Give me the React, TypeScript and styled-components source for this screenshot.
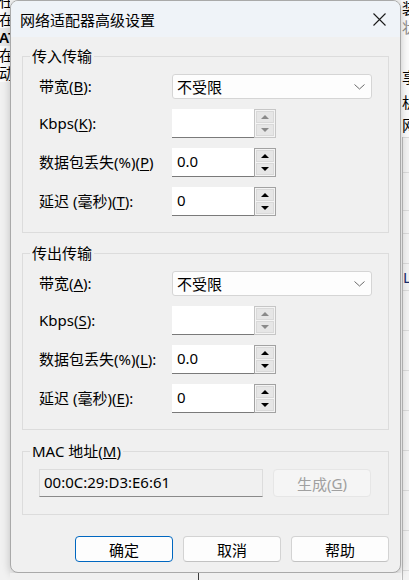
import { FC, ReactNode } from 'react'
import styled, { createGlobalStyle } from 'styled-components'

const GlobalStyle = createGlobalStyle`
  html, body {
    margin: 0;
    padding: 0;
  }
  body {
    font-family: 'Noto Sans', 'Noto Sans CJK SC', sans-serif;
    background: #f4f4f4;
    color: #000;
  }
`

type Row = { label: ReactNode; value?: string; disabled?: boolean }

const leftLines = ['任务', '在', 'AT', '在', '动']
const rightLines: { text: string; h: number; muted?: boolean }[] = [
  { text: '装', h: 16 },
  { text: '状', h: 22, muted: true },
  { text: '', h: 26 },
  { text: '享', h: 26 },
  { text: '机', h: 23 },
  { text: '网', h: 24 }
]
const rightRows = [34, 37, 22, 29, 26, 39, 39, 39, 39, 39, 39, 39, 39, 39, 39]

const SpinBox: FC<{ value?: string; disabled?: boolean }> = ({ value, disabled }) => (
  <Spin>
    <SpinInput>{value}</SpinInput>
    <SpinButtons $disabled={disabled}>
      <SpinButton>
        <Arrow $dir="up" $disabled={disabled} />
      </SpinButton>
      <SpinButton>
        <Arrow $dir="down" $disabled={disabled} />
      </SpinButton>
    </SpinButtons>
  </Spin>
)

const TransferGroup: FC<{ title: string; bandwidth: ReactNode; rows: Row[] }> = ({ title, bandwidth, rows }) => (
  <GroupBox>
    <Legend>{title}</Legend>
    <FormGrid>
      <Label>{bandwidth}</Label>
      <Combo>
        <span>不受限</span>
        <svg width="11" height="6" viewBox="0 0 11 6">
          <path d="M0.5 0.5 L5.5 5 L10.5 0.5" fill="none" stroke="#6a6a6a" strokeWidth="1" />
        </svg>
      </Combo>
      {rows.map((row, i) => (
        <FormRow key={i}>
          <Label>{row.label}</Label>
          <SpinBox value={row.value} disabled={row.disabled} />
        </FormRow>
      ))}
    </FormGrid>
  </GroupBox>
)

const App: FC = () => {
  return (
    <Page>
      <GlobalStyle />
      <LeftStrip>
        {leftLines.map((line, i) => (
          <BgLine key={i} $highlight={line === 'AT'}>
            {line}
          </BgLine>
        ))}
      </LeftStrip>
      <DialogColumn>
        <Dialog>
          <TitleBar>
            <Title>网络适配器高级设置</Title>
            <svg width="13" height="13" viewBox="0 0 13 13">
              <path d="M0.5 0.5 L12.5 12.5 M12.5 0.5 L0.5 12.5" stroke="#1b1b1b" strokeWidth="1.1" />
            </svg>
          </TitleBar>
          <Body>
            <TransferGroup
              title="传入传输"
              bandwidth={
                <>
                  带宽(<u>B</u>):
                </>
              }
              rows={[
                {
                  label: (
                    <>
                      Kbps(<u>K</u>):
                    </>
                  ),
                  disabled: true
                },
                {
                  label: (
                    <>
                      数据包丢失(%)(<u>P</u>)
                    </>
                  ),
                  value: '0.0'
                },
                {
                  label: (
                    <>
                      延迟 (毫秒)(<u>T</u>):
                    </>
                  ),
                  value: '0'
                }
              ]}
            />
            <Spacer $h={11} />
            <TransferGroup
              title="传出传输"
              bandwidth={
                <>
                  带宽(<u>A</u>):
                </>
              }
              rows={[
                {
                  label: (
                    <>
                      Kbps(<u>S</u>):
                    </>
                  ),
                  disabled: true
                },
                {
                  label: (
                    <>
                      数据包丢失(%)(<u>L</u>):
                    </>
                  ),
                  value: '0.0'
                },
                {
                  label: (
                    <>
                      延迟 (毫秒)(<u>E</u>):
                    </>
                  ),
                  value: '0'
                }
              ]}
            />
            <Spacer $h={12} />
            <GroupBox $bottom={17}>
              <Legend>
                MAC 地址(<u>M</u>)
              </Legend>
              <MacRow>
                <MacField>00:0C:29:D3:E6:61</MacField>
                <GenerateButton>
                  生成(<u>G</u>)
                </GenerateButton>
              </MacRow>
            </GroupBox>
            <Footer>
              <DialogButton $primary>确定</DialogButton>
              <DialogButton>取消</DialogButton>
              <DialogButton>帮助</DialogButton>
            </Footer>
          </Body>
        </Dialog>
        <BottomStrip>
          <BottomDivider />
        </BottomStrip>
      </DialogColumn>
      <RightStrip>
        {rightLines.map((line, i) => (
          <RightText key={i} $h={line.h} $muted={line.muted}>
            {line.text}
          </RightText>
        ))}
        <RightTable>
          {rightRows.map((h, i) => (
            <RightRow key={i} $h={h}>
              {i === 4 ? 'LA' : ''}
            </RightRow>
          ))}
        </RightTable>
      </RightStrip>
    </Page>
  )
}

const Page = styled.div`
  width: 409px;
  height: 580px;
  display: flex;
  overflow: hidden;
  background: #f4f4f4;
`

const LeftStrip = styled.div`
  width: 10px;
  flex-shrink: 0;
  display: flex;
  flex-direction: column;
  overflow: hidden;
  margin-top: -8px;
  background: linear-gradient(#fbfbfb 0, #fbfbfb 90px, #f1f1f1 90px);
  font-family: 'Noto Sans CJK SC', sans-serif;
  font-size: 15px;
  line-height: 18px;
  white-space: nowrap;
`

const BgLine = styled.div<{ $highlight?: boolean }>`
  height: 18px;
  flex-shrink: 0;
  margin-left: -1px;
  background: ${(p) => (p.$highlight ? '#e9e9e9' : 'transparent')};
  font-family: ${(p) => (p.$highlight ? "'Noto Sans', sans-serif" : "'Noto Sans CJK SC', sans-serif")};
  font-weight: ${(p) => (p.$highlight ? 600 : 400)};
`

const DialogColumn = styled.div`
  width: 391px;
  flex-shrink: 0;
  display: flex;
  flex-direction: column;
  position: relative;
  z-index: 1;
`

const Dialog = styled.div`
  height: 573px;
  flex-shrink: 0;
  box-sizing: border-box;
  display: flex;
  flex-direction: column;
  background: #f0f0f0;
  border: 1px solid #a9a9a9;
  border-radius: 8px;
  overflow: hidden;
  box-shadow: 0 2px 8px rgba(0, 0, 0, 0.22);
`

const TitleBar = styled.div`
  height: 36px;
  flex-shrink: 0;
  display: flex;
  align-items: center;
  justify-content: space-between;
  padding: 0 14px 0 9px;
  background: #eff3f8;
`

const Title = styled.div`
  font-family: 'Noto Sans CJK SC', sans-serif;
  font-size: 15px;
  line-height: 18px;
  margin-top: 2px;
`

const Body = styled.div`
  display: flex;
  flex-direction: column;
  padding: 10px 11px 0 11px;
`

const Spacer = styled.div<{ $h: number }>`
  height: ${(p) => p.$h}px;
  flex-shrink: 0;
`

const GroupBox = styled.fieldset<{ $bottom?: number }>`
  margin: 0;
  min-width: 0;
  padding: 9px 15px ${(p) => p.$bottom ?? 16}px 16px;
  border: 1px solid #dcdcdc;
`

const Legend = styled.legend`
  margin-left: -9px;
  padding: 0 2px;
  font-size: 15px;
  line-height: 18px;
  height: 18px;
`

const FormGrid = styled.div`
  display: grid;
  grid-template-columns: 133px 1fr;
  row-gap: 10px;
  align-items: center;
`

const FormRow = styled.div`
  display: contents;
`

const Label = styled.div`
  font-size: 15px;
  line-height: 18px;
  white-space: nowrap;
  overflow: hidden;
  padding-bottom: 1px;

  u {
    text-underline-offset: 2px;
  }
`

const Combo = styled.div`
  width: 200px;
  height: 25px;
  box-sizing: border-box;
  display: flex;
  align-items: center;
  justify-content: space-between;
  padding: 0 6px 0 4px;
  background: #fdfdfd;
  border: 1px solid #d5d5d5;
  border-radius: 3px;
  font-size: 15px;
`

const Spin = styled.div`
  display: flex;
  height: 29px;
`

const SpinInput = styled.div`
  width: 82px;
  height: 29px;
  box-sizing: border-box;
  padding: 0 0 3px 5px;
  display: flex;
  align-items: center;
  background: #fff;
  border-bottom: 1px solid #7a7a7a;
  font-size: 15px;
`

const SpinButtons = styled.div<{ $disabled?: boolean }>`
  width: 22px;
  height: 29px;
  box-sizing: border-box;
  display: flex;
  flex-direction: column;
  gap: 1px;
  padding: 1px;
  background: #f4f4f4;
  border: 1px solid ${(p) => (p.$disabled ? '#c6c6c6' : '#a2a2a2')};
`

const SpinButton = styled.div`
  flex: 1;
  display: flex;
  align-items: center;
  justify-content: center;
  background: #e6e6e6;
  border: 1px solid #d9d9d9;
`

const Arrow = styled.div<{ $dir: 'up' | 'down'; $disabled?: boolean }>`
  width: 0;
  height: 0;
  border-left: 4px solid transparent;
  border-right: 4px solid transparent;
  ${(p) =>
    p.$dir === 'up'
      ? `border-bottom: 4px solid ${p.$disabled ? '#8a8a8a' : '#000'};`
      : `border-top: 4px solid ${p.$disabled ? '#8a8a8a' : '#000'};`}
`

const MacRow = styled.div`
  display: flex;
  gap: 10px;
`

const MacField = styled.div`
  width: 224px;
  height: 28px;
  box-sizing: border-box;
  display: flex;
  align-items: center;
  padding: 0 0 2px 4px;
  background: #f0f0f0;
  border: 1px solid #dcdcdc;
  border-bottom-color: #8a8a8a;
  font-size: 15px;
`

const GenerateButton = styled.div`
  width: 98px;
  height: 28px;
  box-sizing: border-box;
  display: flex;
  align-items: center;
  justify-content: center;
  background: #f5f5f5;
  border: 1px solid #e6e6e6;
  border-radius: 4px;
  color: #a0a0a0;
  font-size: 15px;
`

const Footer = styled.div`
  display: flex;
  justify-content: flex-end;
  gap: 10px;
  padding: 21px 0 0;
`

const DialogButton = styled.div<{ $primary?: boolean }>`
  width: 98px;
  height: 26px;
  box-sizing: border-box;
  display: flex;
  align-items: center;
  justify-content: center;
  background: #fdfdfd;
  border: 1px solid ${(p) => (p.$primary ? '#0067c0' : '#d3d3d3')};
  border-bottom-color: ${(p) => (p.$primary ? '#0067c0' : '#c2c2c2')};
  border-radius: 4px;
  font-family: 'Noto Sans CJK SC', sans-serif;
  font-size: 15px;
`

const BottomStrip = styled.div`
  flex: 1;
  display: flex;
  background: #f0f0f0;
`

const BottomDivider = styled.div`
  width: 1px;
  margin-left: 188px;
  background: #3c3c3c;
`

const RightStrip = styled.div`
  flex: 1;
  display: flex;
  flex-direction: column;
  overflow: hidden;
  background: #fbfbfb;
  font-family: 'Noto Sans CJK SC', sans-serif;
  font-size: 15px;
  white-space: nowrap;
`

const RightText = styled.div<{ $h: number; $muted?: boolean }>`
  height: ${(p) => p.$h}px;
  flex-shrink: 0;
  line-height: ${(p) => p.$h}px;
  padding-left: 1px;
  color: ${(p) => (p.$muted ? '#8a8a8a' : '#000')};
`

const RightTable = styled.div`
  flex-shrink: 0;
  margin-left: 1px;
  border-left: 1px solid #bdbdbd;
  background: #f3f3f3;
  display: flex;
  flex-direction: column;
`

const RightRow = styled.div<{ $h: number }>`
  height: ${(p) => p.$h}px;
  flex-shrink: 0;
  line-height: ${(p) => p.$h}px;
  border-top: 1px solid #dadada;
  color: #1a2b6b;
  font-family: 'Noto Sans', sans-serif;
`

export default App
